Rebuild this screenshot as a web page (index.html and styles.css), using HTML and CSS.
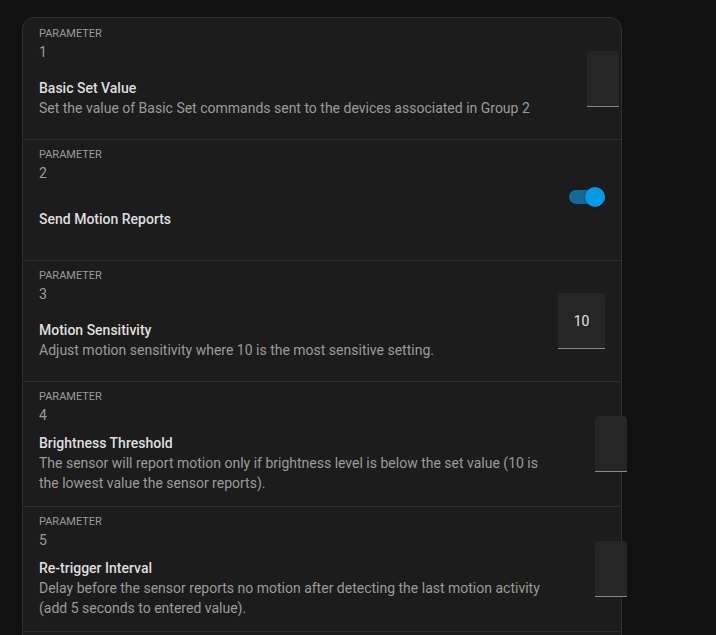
FILE: index.html
```
<!DOCTYPE html>
<html lang="en">
<head>
    <meta charset="UTF-8">
    <meta name="viewport" content="width=device-width, initial-scale=1.0">
    <title>Node Configuration</title>
    <link rel="stylesheet" href="styles.css">
</head>
<body>
    <div class="page">
        <div class="config-card">
            <div class="param-row">
                <div class="param-info">
                    <div class="param-prefix">
                        <span class="param-label">Parameter</span>
                        <span class="param-number">1</span>
                    </div>
                    <div class="param-body">
                        <div class="param-title">Basic Set Value</div>
                        <div class="param-desc">Set the value of Basic Set commands sent to the devices associated in Group 2</div>
                    </div>
                </div>
                <div class="param-field field-narrow push-14">
                    <input type="text" value="">
                </div>
            </div>

            <div class="param-row">
                <div class="param-info">
                    <div class="param-prefix">
                        <span class="param-label">Parameter</span>
                        <span class="param-number">2</span>
                    </div>
                    <div class="param-body">
                        <div class="param-title">Send Motion Reports</div>
                    </div>
                </div>
                <div class="switch on">
                    <span class="switch-track"></span>
                    <span class="switch-thumb"></span>
                </div>
            </div>

            <div class="param-row">
                <div class="param-info">
                    <div class="param-prefix">
                        <span class="param-label">Parameter</span>
                        <span class="param-number">3</span>
                    </div>
                    <div class="param-body">
                        <div class="param-title">Motion Sensitivity</div>
                        <div class="param-desc">Adjust motion sensitivity where 10 is the most sensitive setting.</div>
                    </div>
                </div>
                <div class="param-field">
                    <input type="text" value="10">
                </div>
            </div>

            <div class="param-row">
                <div class="param-info">
                    <div class="param-prefix">
                        <span class="param-label">Parameter</span>
                        <span class="param-number">4</span>
                    </div>
                    <div class="param-body">
                        <div class="param-title">Brightness Threshold</div>
                        <div class="param-desc">The sensor will report motion only if brightness level is below the set value (10 is the lowest value the sensor reports).</div>
                    </div>
                </div>
                <div class="param-field field-narrow push-22">
                    <input type="text" value="">
                </div>
            </div>

            <div class="param-row">
                <div class="param-info">
                    <div class="param-prefix">
                        <span class="param-label">Parameter</span>
                        <span class="param-number">5</span>
                    </div>
                    <div class="param-body">
                        <div class="param-title">Re-trigger Interval</div>
                        <div class="param-desc">Delay before the sensor reports no motion after detecting the last motion activity (add 5 seconds to entered value).</div>
                    </div>
                </div>
                <div class="param-field field-narrow push-22">
                    <input type="text" value="">
                </div>
            </div>
        </div>
    </div>
</body>
</html>
```

FILE: styles.css
```
:root {
    --primary-background: #111111;
    --card-background: #1c1c1c;
    --divider: #2c2c2c;
    --card-border: #303030;
    --primary-text: #e1e1e1;
    --secondary-text: #9b9b9b;
    --field-background: #262626;
    --field-line: #8a8a8a;
    --accent: #039be5;
    --accent-track: #176a98;
}

* {
    margin: 0;
    padding: 0;
    box-sizing: border-box;
}

html, body {
    height: 100%;
    overflow: hidden;
}

body {
    background: var(--primary-background);
    font-family: 'Roboto', 'Liberation Sans', sans-serif;
    color: var(--primary-text);
}

.page {
    padding: 17px 0 0 22px;
}

.config-card {
    width: 600px;
    padding: 1px 0 40px;
    background: var(--card-background);
    border: 1px solid var(--card-border);
    border-radius: 12px;
}

.param-row {
    display: flex;
    align-items: center;
    gap: 40px;
    padding: 0 16px;
    border-bottom: 1px solid var(--divider);
}

.param-info {
    flex: 1;
    min-width: 0;
    padding-bottom: 5px;
}

.param-prefix {
    height: 43px;
    padding-top: 7px;
    color: var(--secondary-text);
}

.param-label {
    display: block;
    font-size: 11px;
    line-height: 16px;
    text-transform: uppercase;
}

.param-number {
    display: block;
    font-size: 14px;
    line-height: 20px;
}

.param-body {
    min-height: 72px;
    padding: 8px 0;
    display: flex;
    flex-direction: column;
    justify-content: center;
}

.param-title {
    font-size: 14px;
    font-weight: 500;
    line-height: 20px;
    color: #dedede;
}

.param-desc {
    font-size: 14px;
    line-height: 20px;
    color: var(--secondary-text);
}

/* Number fields */
.param-field {
    flex-shrink: 0;
    width: 47px;
}

.param-field input {
    width: 100%;
    height: 56px;
    background: var(--field-background);
    border: none;
    border-bottom: 1px solid var(--field-line);
    border-radius: 4px 4px 0 0;
    color: var(--primary-text);
    font-family: 'Roboto', 'Liberation Sans', sans-serif;
    font-size: 14px;
    text-align: center;
    outline: none;
}

.field-narrow {
    width: 32px;
}

.push-14 {
    margin-right: -14px;
}

.push-22 {
    margin-right: -22px;
}

/* Toggle */
.switch {
    flex-shrink: 0;
    position: relative;
    width: 36px;
    height: 20px;
    margin-bottom: 6px;
}

.switch-track {
    position: absolute;
    left: 0;
    top: 3px;
    width: 36px;
    height: 14px;
    border-radius: 7px;
    background: #444;
}

.switch-thumb {
    position: absolute;
    top: 0;
    left: 0;
    width: 20px;
    height: 20px;
    border-radius: 50%;
    background: #bbb;
    box-shadow: 0 1px 3px rgba(0, 0, 0, 0.4);
}

.switch.on .switch-track {
    background: var(--accent-track);
}

.switch.on .switch-thumb {
    left: 16px;
    background: var(--accent);
}
```
